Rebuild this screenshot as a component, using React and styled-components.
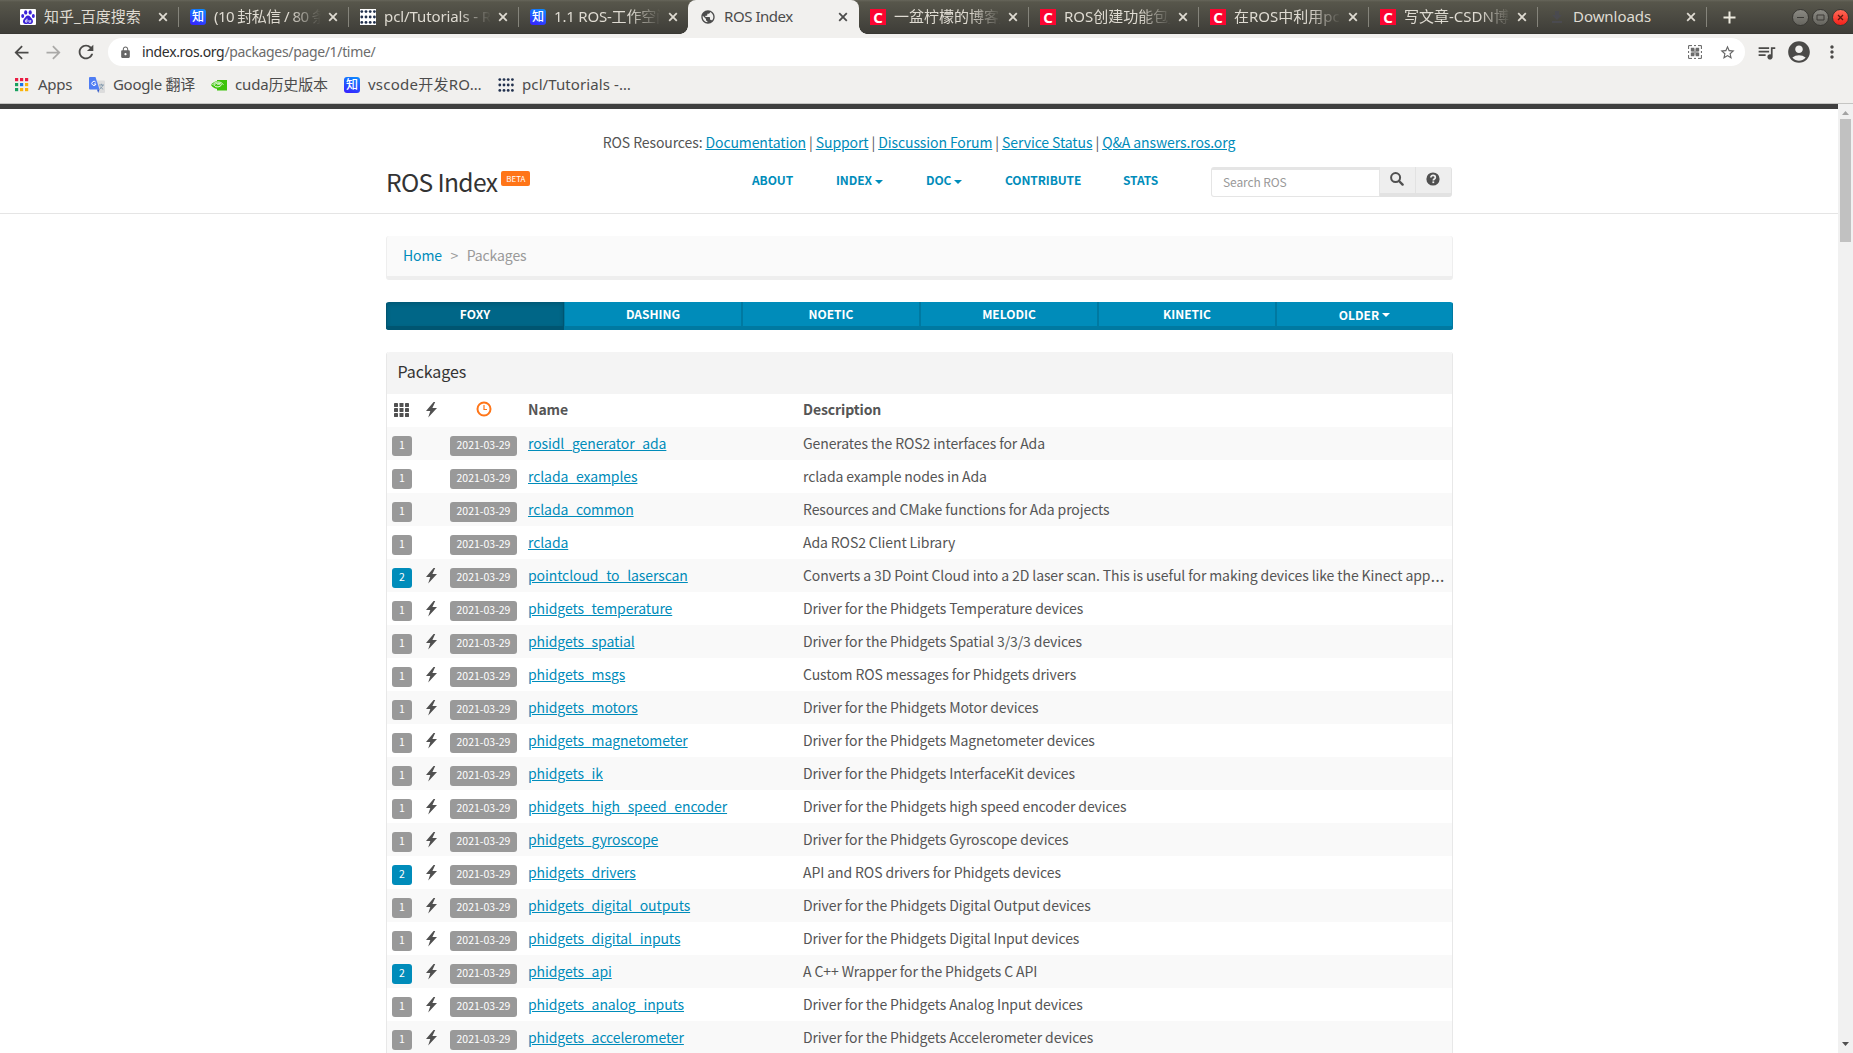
import React from 'react';
import styled, { createGlobalStyle, css } from 'styled-components';
import {
  MdAccountCircle,
  MdArrowBack,
  MdArrowForward,
  MdLock,
  MdMoreVert,
  MdPublic,
  MdQueueMusic,
  MdRefresh,
  MdStarBorder,
} from 'react-icons/md';

const GlobalStyles = createGlobalStyle`
  * {
    box-sizing: border-box;
  }
  body {
    margin: 0;
    overflow: hidden;
    background: #fff;
    font-family: 'Noto Sans CJK SC', 'Source Sans Pro', sans-serif;
    font-size: 14px;
    letter-spacing: -0.1px;
    color: #555;
  }
  a {
    color: #008cba;
  }
  svg {
    display: block;
    flex: none;
  }
`;

/* ---------- browser chrome ---------- */

const WindowStyles = styled.div`
  display: flex;
  flex-direction: column;
  width: 1853px;
  height: 1053px;
  overflow: hidden;
`;

const ChromeStyles = styled.div`
  flex: none;
  height: 104px;
  background: #f1f0ee;
  border-bottom: 1px solid #c5c5c3;
  font-family: 'Noto Sans', 'Noto Sans CJK SC', sans-serif;
  font-size: 15px;
  color: #4c4c4c;
`;

const TabStrip = styled.div`
  display: flex;
  height: 34px;
  padding-left: 8px;
  background: linear-gradient(#66655a 0, #57564b 2px, #3e3d38 33px, #34332f 34px);
`;

const TabStyles = styled.div`
  position: relative;
  display: flex;
  align-items: center;
  width: ${({ $width }) => $width || 170}px;
  height: 34px;
  padding: 0 10px 0 12px;
  color: #dfdbd2;

  ${({ $line }) => $line && css`
    &::after {
      content: '';
      width: 1px;
      height: 20px;
      position: absolute;
      right: -1px;
      top: 7px;
      background: #85847b;
    }
  `}

  ${({ $active }) => $active && css`
    width: 171px;
    margin-right: -1px;
    padding-right: 11px;
    color: #4c4c4c;
    background: #f1f0ee;
    border-radius: 8px 8px 0 0;

    &::before,
    &::after {
      content: '';
      position: absolute;
      bottom: 0;
      width: 8px;
      height: 8px;
    }
    &::before {
      left: -8px;
      background: radial-gradient(circle at 0 0, transparent 7.5px, #f1f0ee 8px);
    }
    &::after {
      right: -8px;
      background: radial-gradient(circle at 100% 0, transparent 7.5px, #f1f0ee 8px);
    }
  `}
`;

const TabTitle = styled.span`
  width: 107px;
  margin: 0 0 2px 8px;
  overflow: hidden;
  white-space: nowrap;
  line-height: 24px;
  letter-spacing: ${({ $track }) => $track || 0}px;
  ${({ $fade }) => $fade && css`
    mask-image: linear-gradient(to right, #000 75px, transparent 107px);
  `}
`;

const CloseIcon = styled.svg`
  margin-left: auto;
`;

const WindowButtons = styled.div`
  display: flex;
  align-items: center;
  gap: 3px;
  margin: 0 4px 0 auto;
`;

const WindowButton = styled.span`
  display: flex;
  align-items: center;
  justify-content: center;
  width: 17px;
  height: 17px;
  border: 1px solid #383733;
  border-radius: 50%;
  background: ${({ $red }) => ($red ? 'linear-gradient(#ff6b57, #f5201a)' : 'linear-gradient(#8b8a83, #66655f)')};
`;

const NewTab = styled.div`
  display: flex;
  align-items: center;
  margin-left: 17px;
`;

const Toolbar = styled.div`
  display: flex;
  align-items: center;
  height: 36px;
  padding-left: 11px;
  color: #4b4a48;
`;

const ToolIcon = styled.span`
  display: flex;
  flex: none;
  width: ${({ $width }) => $width || 32}px;
  color: ${({ $muted }) => ($muted ? '#aaa9a7' : 'inherit')};
`;

const Omnibox = styled.div`
  display: flex;
  align-items: center;
  flex: none;
  width: 1637px;
  height: 28px;
  margin-right: 11px;
  padding: 0 9px 0 11px;
  border-radius: 14px;
  background: #fff;
  color: #666;
`;

const Url = styled.span`
  margin: 0 auto 0 10px;
  color: #6c6c6c;
  font-size: 14px;
  line-height: 24px;
  letter-spacing: -0.34px;

  b {
    font-weight: normal;
    color: #2e2e2e;
  }
`;

const BookmarkBar = styled.div`
  display: flex;
  align-items: center;
  height: 32px;
  padding: 0 0 4px 15px;
`;

const Bookmark = styled.span`
  display: flex;
  align-items: center;
  width: ${({ $width }) => $width}px;
  white-space: nowrap;
  line-height: 24px;
  letter-spacing: ${({ $track }) => $track || 0}px;

  svg,
  i {
    margin: 2px 8px 0 0;
  }
`;

const SquareIcon = styled.i`
  display: flex;
  align-items: center;
  justify-content: center;
  flex: none;
  width: 16px;
  height: 16px;
  border-radius: ${({ $csdn }) => ($csdn ? 0 : 3)}px;
  background: ${({ $csdn }) => ($csdn ? '#fc0531' : 'linear-gradient(200deg, #0a90ff, #3a1cff)')};
  color: #fff;
  font-style: normal;
  font-weight: ${({ $csdn }) => ($csdn ? 700 : 500)};
  font-size: ${({ $csdn }) => ($csdn ? 15 : 12)}px;
  line-height: 16px;
  letter-spacing: 0;
`;

const Close = () => (
  <CloseIcon width="10" height="10" viewBox="0 0 10 10">
    <path d="M1.2 1.2l7.6 7.6M8.8 1.2L1.2 8.8" stroke="currentColor" strokeWidth="1.8" />
  </CloseIcon>
);

const Paw = () => (
  <svg width="16" height="16" viewBox="0 0 16 16">
    <rect width="16" height="16" rx="1" fill="#fff" />
    <g fill="#3a22d8">
      <ellipse cx="5.7" cy="3.4" rx="1.6" ry="2.2" />
      <ellipse cx="10.2" cy="3.4" rx="1.6" ry="2.2" />
      <ellipse cx="2.7" cy="6.9" rx="1.5" ry="2" />
      <ellipse cx="13.3" cy="6.9" rx="1.5" ry="2" />
      <path d="M8 6.6c2 0 2.4 1.8 3.7 3 1.7 1.5 2 5.4-1 5.4-1 0-1.7-.3-2.7-.3s-1.7.3-2.7.3c-3 0-2.7-3.9-1-5.4 1.3-1.2 1.7-3 3.7-3z" />
    </g>
    <path d="M7 9.6v3.5H5.6v-2H7M9 11v2.2h1.7V11" stroke="#fff" fill="none" strokeWidth=".8" />
  </svg>
);

const DotGrid = ({ clear }) => (
  <svg width="16" height="16" viewBox="0 0 16 16">
    {!clear && <rect width="16" height="16" fill="#fff" />}
    {[1.8, 6, 10.2, 14.4].map((x) => [2.6, 8, 13.4].map((y) => (
      <circle key={`${x}-${y}`} cx={x} cy={y} r="1.4" fill="#22314e" />
    )))}
  </svg>
);

const APP_COLORS = ['#ea1d43', '#ea1d43', '#ea1d43', '#19a15f', '#1a73e8', '#fbb30a', '#19a15f', '#fbb30a', '#fbb30a'];

const AppsIcon = () => (
  <svg width="15" height="14" viewBox="0 0 15 14">
    {APP_COLORS.map((fill, i) => (
      <rect key={i} x={(i % 3) * 5} y={Math.floor(i / 3) * 5} width="3.2" height="3.2" fill={fill} />
    ))}
  </svg>
);

const TranslateIcon = () => (
  <svg width="16" height="16" viewBox="0 0 16 16">
    <path d="M6 3.5h9a1 1 0 0 1 1 1V15a1 1 0 0 1-1 1h-4.5z" fill="#dcdcdc" />
    <path d="M0 1a1 1 0 0 1 1-1h5.5L10.5 12.5H1a1 1 0 0 1-1-1z" fill="#4f7df3" />
    <path d="M8 12.5h2.5L9.2 16z" fill="#3158c9" />
    <path d="M6.7 5.2A2.1 2.1 0 1 0 7 7H5" stroke="#fff" fill="none" strokeWidth="1" />
    <path d="M10 8h5M12.4 6.8V8M13.8 8c-.5 2-1.6 3-3 4M11.2 9.5c.8 1.4 1.6 2 3 2.6" stroke="#7a93a8" fill="none" strokeWidth=".9" />
  </svg>
);

const NvidiaIcon = () => (
  <svg width="16" height="16" viewBox="0 0 16 16">
    <path d="M6 3h10v10.5H6z" fill="#3cc40a" />
    <path d="M0 8c2-3 5-4.300 8-4 2.500.3 4.500 2 5.500 3.700C12 10.500 10 12 7.300 12 4.500 12 1.600 10.700 0 8z" fill="#3cc40a" />
    <path d="M1.500 8C3.500 5.300 5.500 4.800 8 5c2 .3 3.400 1.300 4.400 2.600M3 8.200c1.600-2.300 6-2.700 7.600-.5C9 10.200 5 10.800 3 8.200zM6 8.200c.8-1.300 2-1 2.800-.4" stroke="#fff" fill="none" strokeWidth=".9" />
  </svg>
);

const QrIcon = () => (
  <svg width="14" height="14" viewBox="0 0 14 14">
    <path d="M.6 4V.6H4M6 .6h2M10 .6h3.4V4M13.4 6v2M13.4 10v3.4H10M8 13.4H6M4 13.4H.6V10M.6 8V6" stroke="#606060" fill="none" strokeWidth="1" />
    <path d="M2.8 2.8h3.6v3.6H2.8zM7.6 2.8h3.6v3.6H7.6zM2.8 7.6h3.6v3.6H2.8zM7.6 7.6h3.6v3.6H7.6z" fill="#6a6a6a" />
    <path d="M4 7h6M7 4v6" stroke="#8a8a8a" strokeWidth="1" />
  </svg>
);

const Zhihu = () => <SquareIcon>知</SquareIcon>;
const Csdn = () => <SquareIcon $csdn>C</SquareIcon>;

const TABS = [
  { icon: <Paw />, title: '知乎_百度搜索', line: true },
  { icon: <Zhihu />, title: '(10 封私信 / 80 条', fade: true, line: true, track: -0.55 },
  { icon: <DotGrid />, title: 'pcl/Tutorials - R', fade: true, line: true, track: -0.1 },
  { icon: <Zhihu />, title: '1.1 ROS-工作空间', fade: true, track: -0.2 },
  { icon: <MdPublic size={16} />, title: 'ROS Index', active: true, track: -0.45 },
  { icon: <Csdn />, title: '一盆柠檬的博客_', fade: true, line: true },
  { icon: <Csdn />, title: 'ROS创建功能包_', fade: true, line: true },
  { icon: <Csdn />, title: '在ROS中利用pcl', fade: true, line: true },
  { icon: <Csdn />, title: '写文章-CSDN博客', fade: true, line: true, width: 169 },
  {
    icon: (
      <svg width="16" height="16" viewBox="0 0 16 16">
        <path d="M6 2h4v4h3l-5 5-5-5h3zM3 12h10v2H3z" fill="#4a4a4f" />
      </svg>
    ),
    title: 'Downloads',
    line: true,
    width: 169,
    track: -0.05,
  },
];

const BrowserChrome = () => (
  <ChromeStyles>
    <TabStrip>
      {TABS.map((tab) => (
        <TabStyles key={tab.title} $active={tab.active} $line={tab.line} $width={tab.width}>
          {tab.icon}
          <TabTitle $fade={tab.fade} $track={tab.track}>{tab.title}</TabTitle>
          <Close />
        </TabStyles>
      ))}
      <NewTab>
        <svg width="13" height="13" viewBox="0 0 13 13">
          <path d="M6.5 .5v12M.5 6.5h12" stroke="#eeebe0" strokeWidth="2" />
        </svg>
      </NewTab>
      <WindowButtons>
        <WindowButton>
          <svg width="9" height="9" viewBox="0 0 9 9"><path d="M1 4.5h7" stroke="#3c3b37" /></svg>
        </WindowButton>
        <WindowButton>
          <svg width="9" height="9" viewBox="0 0 9 9"><path d="M1 2h7v5H1z" stroke="#3c3b37" fill="none" /></svg>
        </WindowButton>
        <WindowButton $red>
          <svg width="9" height="9" viewBox="0 0 9 9"><path d="M2 2l5 5M7 2L2 7" stroke="#5c1a10" strokeWidth="1.3" /></svg>
        </WindowButton>
      </WindowButtons>
    </TabStrip>
    <Toolbar>
      <ToolIcon><MdArrowBack size={21} /></ToolIcon>
      <ToolIcon $muted><MdArrowForward size={21} /></ToolIcon>
      <ToolIcon $width={33}><MdRefresh size={22} /></ToolIcon>
      <Omnibox>
        <MdLock size={13} />
        <Url><b>index.ros.org</b>/packages/page/1/time/</Url>
        <ToolIcon $width={31}><QrIcon /></ToolIcon>
        <MdStarBorder size={17} />
      </Omnibox>
      <ToolIcon $width={30}><MdQueueMusic size={21} /></ToolIcon>
      <ToolIcon $width={36}><MdAccountCircle size={26} /></ToolIcon>
      <ToolIcon $width={20}><MdMoreVert size={20} /></ToolIcon>
    </Toolbar>
    <BookmarkBar>
      <Bookmark $width={74} $track={-0.25}><AppsIcon />Apps</Bookmark>
      <Bookmark $width={122} $track={-0.3}><TranslateIcon />Google 翻译</Bookmark>
      <Bookmark $width={133} $track={-0.15}><NvidiaIcon />cuda历史版本</Bookmark>
      <Bookmark $width={154} $track={0.25}><Zhihu />vscode开发RO…</Bookmark>
      <Bookmark $width={140} $track={0.1}><DotGrid clear />pcl/Tutorials -…</Bookmark>
    </BookmarkBar>
  </ChromeStyles>
);

/* ---------- page ---------- */

const Viewport = styled.div`
  display: flex;
  height: 949px;
`;

const PageStyles = styled.div`
  width: 1838px;
  height: 949px;
  overflow: hidden;
  border-top: 5px solid #3f3f3f;
`;

const ScrollBar = styled.div`
  display: flex;
  flex-direction: column;
  align-items: center;
  width: 15px;
  padding-top: 6px;
  background: #f1f1f1;
`;

const Thumb = styled.div`
  width: 11px;
  height: 123px;
  margin: 4px 0 auto;
  background: #c1c1c1;
`;

const Container = styled.div`
  width: 1067px;
  margin-left: 386px;
`;

const Header = styled.header`
  height: 105px;
  padding-top: 21px;
  border-bottom: 1px solid #e5e5e5;
`;

const Resources = styled.div`
  height: 24px;
  padding-right: 1px;
  line-height: 24px;
  text-align: center;
  white-space: nowrap;
`;

const TextLink = styled.a`
  text-decoration: underline;
  text-decoration-thickness: 1px;
  text-underline-offset: 1px;
`;

const HeaderRow = styled.div`
  display: flex;
  height: 40px;
`;

const Brand = styled.div`
  display: flex;
  width: 366px;
  padding-top: 7px;
  color: #333;
  font-size: 24.6px;
  font-weight: 400;
  line-height: 40px;
  letter-spacing: -0.65px;
  white-space: nowrap;
`;

const Beta = styled.span`
  width: 29px;
  height: 15px;
  margin: 10px 0 0 4px;
  border-radius: 2px;
  background: #ff7518;
  color: #fff;
  font-size: 8px;
  line-height: 16px;
  letter-spacing: 0;
  text-align: center;
`;

const Nav = styled.nav`
  display: flex;
  width: 459px;
  padding-top: 14px;
`;

const NavLink = styled.a`
  display: flex;
  align-items: center;
  width: ${({ $width }) => $width}px;
  height: 24px;
  font-size: 12px;
  font-weight: 700;
  line-height: 24px;
`;

const Caret = styled.i`
  width: 0;
  margin: ${({ $low }) => ($low ? 3 : 0)}px 0 0 3px;
  border: solid transparent;
  border-width: 4px 4px 0;
  border-top-color: currentColor;
`;

const SearchGroup = styled.div`
  display: flex;
  height: 30px;
  margin-top: 13px;
`;

const SearchInput = styled.div`
  width: 169px;
  padding-left: 11px;
  border: 1px solid #e5e5e5;
  border-top-width: 3px;
  border-radius: 3px 0 0 3px;
  color: #999;
  font-size: 12px;
  line-height: 24px;
`;

const SearchButton = styled.div`
  display: flex;
  justify-content: center;
  width: 36px;
  padding: 5px 1px 0 0;
  border: solid #e2e2e2;
  border-width: 0 1px 4px 0;
  border-radius: ${({ $last }) => ($last ? '0 3px 3px 0' : 0)};
  background: #eee;
  color: #505050;
`;

const Breadcrumb = styled.div`
  display: flex;
  gap: 8.5px;
  height: 44px;
  margin-top: 22px;
  padding-left: 16px;
  border: 1px solid #eee;
  border-width: 0 1px 4px;
  border-radius: 3px;
  background: #fafafa;
  color: #999;
  line-height: 38px;
`;

const Distros = styled.div`
  display: flex;
  height: 28px;
  margin-top: 22px;
  border-radius: 3px;
  overflow: hidden;
`;

const Distro = styled.a`
  display: flex;
  align-items: center;
  justify-content: center;
  flex: 0 0 178px;
  border: solid #0079a1;
  border-width: 0 1px 4px 1px;
  background: #008cba;
  color: #fff;
  font-size: 12px;
  font-weight: 700;
  line-height: 20px;
  letter-spacing: 0;

  &:last-child {
    flex: 1;
    padding-top: 2px;
  }

  ${({ $active }) => $active && css`
    border-color: #005571;
    background: #006687;
    box-shadow: inset 0 2px 4px rgba(0, 0, 0, 0.15);
  `}
`;

const Panel = styled.section`
  margin-top: 22px;
  border: 1px solid #e8e8e8;
  border-top: 0;
  border-radius: 3px;
`;

const PanelHeading = styled.div`
  height: 42px;
  padding-left: 10.5px;
  border-radius: 3px 3px 0 0;
  background: #f4f4f4;
  color: #333;
  font-size: 16px;
  line-height: 38px;
`;

const Row = styled.div`
  display: grid;
  grid-template-columns: 33px 23px 85px 275px 1fr;
  height: 33px;
  line-height: ${({ $head }) => ($head ? 30 : 32)}px;
  white-space: nowrap;
  background: ${({ $odd }) => ($odd ? '#f9f9f9' : '#fff')};
  font-weight: ${({ $head }) => ($head ? 700 : 400)};
`;

const Cell = styled.div`
  display: flex;
  justify-content: ${({ $center }) => ($center ? 'center' : 'flex-start')};
  padding-top: ${({ $top }) => $top || 0}px;
  padding-left: ${({ $left }) => $left || 0}px;
`;

const Label = styled.span`
  width: ${({ $width }) => $width}px;
  height: 20px;
  margin-top: 9px;
  border-radius: 3px;
  background: ${({ $blue }) => ($blue ? '#008cba' : '#999')};
  color: #fff;
  font-size: 10.5px;
  line-height: 18px;
  letter-spacing: 0;
  text-align: center;
`;

const Dots = styled.span`
  font-family: 'Open Sans', sans-serif;
  font-size: 18px;
  letter-spacing: 0;
`;

const Flash = () => (
  <svg width="11" height="16" viewBox="0 0 11 16">
    <path d="M7.6 0L0 9h4.3L2.2 15.600 11 6H6.400L9.200 0z" fill="#505050" />
  </svg>
);

const Th = () => (
  <svg width="15" height="14" viewBox="0 0 15 14">
    {[0, 5.5, 11].map((x) => [0, 5, 10].map((y) => (
      <rect key={`${x}-${y}`} x={x} y={y} width="4" height="4" rx=".4" fill="#505050" />
    )))}
  </svg>
);

const Clock = () => (
  <svg width="16" height="16" viewBox="0 0 16 16">
    <circle cx="8" cy="8" r="6.5" stroke="#ff7518" strokeWidth="2" fill="none" />
    <path d="M8 4v4.5h3" stroke="#ff7518" strokeWidth="1.2" fill="none" />
  </svg>
);

const Magnifier = () => (
  <svg width="14" height="14" viewBox="0 0 14 14">
    <circle cx="5.6" cy="5.6" r="4.5" stroke="currentColor" strokeWidth="2" fill="none" />
    <path d="M9 9l3.6 3.6" stroke="currentColor" strokeWidth="2.4" strokeLinecap="round" />
  </svg>
);

const Question = () => (
  <svg width="14" height="14" viewBox="0 0 14 14">
    <circle cx="7" cy="7" r="6.6" fill="currentColor" />
    <path d="M4.9 5.4c0-2.7 4.4-2.6 4.4 0 0 1.5-2 1.6-2 3" stroke="#eee" strokeWidth="1.7" fill="none" />
    <path d="M6.4 9.4h1.8v1.7H6.4z" fill="#eee" />
  </svg>
);

const DISTROS = ['FOXY', 'DASHING', 'NOETIC', 'MELODIC', 'KINETIC', 'OLDER'];

const PACKAGES = [
  ['rosidl_generator_ada', 'Generates the ROS2 interfaces for Ada', 1, false],
  ['rclada_examples', 'rclada example nodes in Ada', 1, false],
  ['rclada_common', 'Resources and CMake functions for Ada projects', 1, false],
  ['rclada', 'Ada ROS2 Client Library', 1, false],
  ['pointcloud_to_laserscan', 'Converts a 3D Point Cloud into a 2D laser scan. This is useful for making devices like the Kinect app…', 2, true],
  ['phidgets_temperature', 'Driver for the Phidgets Temperature devices', 1, true],
  ['phidgets_spatial', 'Driver for the Phidgets Spatial 3/3/3 devices', 1, true],
  ['phidgets_msgs', 'Custom ROS messages for Phidgets drivers', 1, true],
  ['phidgets_motors', 'Driver for the Phidgets Motor devices', 1, true],
  ['phidgets_magnetometer', 'Driver for the Phidgets Magnetometer devices', 1, true],
  ['phidgets_ik', 'Driver for the Phidgets InterfaceKit devices', 1, true],
  ['phidgets_high_speed_encoder', 'Driver for the Phidgets high speed encoder devices', 1, true],
  ['phidgets_gyroscope', 'Driver for the Phidgets Gyroscope devices', 1, true],
  ['phidgets_drivers', 'API and ROS drivers for Phidgets devices', 2, true],
  ['phidgets_digital_outputs', 'Driver for the Phidgets Digital Output devices', 1, true],
  ['phidgets_digital_inputs', 'Driver for the Phidgets Digital Input devices', 1, true],
  ['phidgets_api', 'A C++ Wrapper for the Phidgets C API', 2, true],
  ['phidgets_analog_inputs', 'Driver for the Phidgets Analog Input devices', 1, true],
  ['phidgets_accelerometer', 'Driver for the Phidgets Accelerometer devices', 1, true],
];

const PackageRow = ({ item, odd }) => {
  const [name, description, count, released] = item;
  const cut = description.endsWith('…');
  return (
    <Row $odd={odd}>
      <Cell $left={5}><Label $width={20} $blue={count > 1}>{count}</Label></Cell>
      <Cell $center $top={9}>{released && <Flash />}</Cell>
      <Cell $left={7}><Label $width={67}>2021-03-29</Label></Cell>
      <Cell><TextLink>{name}</TextLink></Cell>
      <Cell>
        {cut ? description.slice(0, -1) : description}
        {cut && <Dots>…</Dots>}
      </Cell>
    </Row>
  );
};

export default function App() {
  return (
    <>
      <GlobalStyles />
      <WindowStyles>
        <BrowserChrome />
        <Viewport>
          <PageStyles>
            <Header>
              <Container>
                <Resources>
                  ROS Resources: <TextLink>Documentation</TextLink> | <TextLink>Support</TextLink> | <TextLink>Discussion Forum</TextLink> | <TextLink>Service Status</TextLink> | <TextLink>Q&amp;A answers.ros.org</TextLink>
                </Resources>
                <HeaderRow>
                  <Brand>ROS Index<Beta>BETA</Beta></Brand>
                  <Nav>
                    <NavLink $width={84}>ABOUT</NavLink>
                    <NavLink $width={90}>INDEX<Caret $low /></NavLink>
                    <NavLink $width={79}>DOC<Caret $low /></NavLink>
                    <NavLink $width={118}>CONTRIBUTE</NavLink>
                    <NavLink>STATS</NavLink>
                  </Nav>
                  <SearchGroup>
                    <SearchInput>Search ROS</SearchInput>
                    <SearchButton><Magnifier /></SearchButton>
                    <SearchButton $last><Question /></SearchButton>
                  </SearchGroup>
                </HeaderRow>
              </Container>
            </Header>
            <Container>
              <Breadcrumb><a>Home</a><span>&gt;</span><span>Packages</span></Breadcrumb>
              <Distros>
                {DISTROS.map((name, i) => (
                  <Distro key={name} $active={i === 0}>
                    {name}
                    {name === 'OLDER' && <Caret />}
                  </Distro>
                ))}
              </Distros>
              <Panel>
                <PanelHeading>Packages</PanelHeading>
                <Row $head>
                  <Cell $left={7} $top={9}><Th /></Cell>
                  <Cell $center $top={8}><Flash /></Cell>
                  <Cell $left={33} $top={7}><Clock /></Cell>
                  <Cell>Name</Cell>
                  <Cell>Description</Cell>
                </Row>
                {PACKAGES.map((item, i) => <PackageRow key={item[0]} item={item} odd={i % 2 === 0} />)}
              </Panel>
            </Container>
          </PageStyles>
          <ScrollBar>
            <svg width="7" height="5" viewBox="0 0 7 5"><path d="M0 5l3.5-4L7 5z" fill="#a3a3a3" /></svg>
            <Thumb />
            <svg width="7" height="12" viewBox="0 0 7 12"><path d="M0 1l3.5 4L7 1z" fill="#505050" /></svg>
          </ScrollBar>
        </Viewport>
      </WindowStyles>
    </>
  );
}
